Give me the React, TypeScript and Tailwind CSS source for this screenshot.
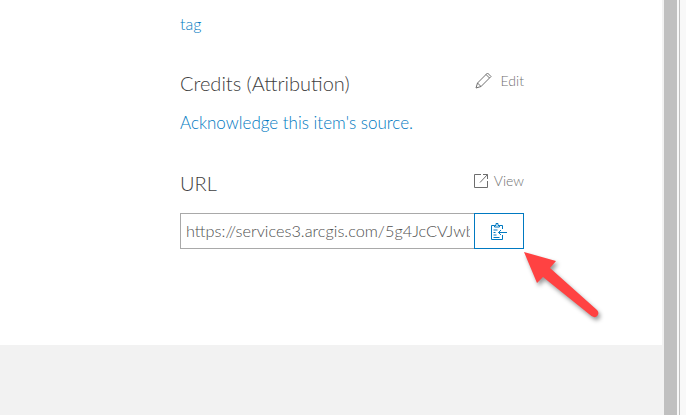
const font = "font-['Lato','Open_Sans',sans-serif]";

function Pencil() {
  return (
    <svg width="17" height="17" viewBox="0 0 17 17" fill="none" stroke="#6e6e6e" strokeWidth="1">
      <path d="M1 16l1.500-5L12.500 1l3.500 3.500-10 10z" />
      <path d="M2.500 11L6 14.500M11 2.500L14.500 6" />
    </svg>
  );
}

function Launch() {
  return (
    <svg width="16" height="16" viewBox="0 0 16 16" fill="none" stroke="#6e6e6e" strokeWidth="1">
      <path d="M8 1.500H1.500v13h13V8" />
      <path d="M7 9.500L14.500 1.500M10 1.500h4.500V6" />
    </svg>
  );
}

function ClipboardIcon() {
  return (
    <svg width="16" height="17" viewBox="0 0 16 17" fill="none" stroke="#0079c1" strokeWidth="1">
      <path d="M3.500 2.500H.5v14h11v-4.500M11.500 6V2.500H8.500" />
      <path d="M3.500 4V2.500h1.500V.5h2v2h1.500V4z" />
      <path d="M2.500 7h4M2.500 9.500h2M2.500 12h3M2.500 14.500h6" />
      <path d="M16 9.500H7.500M10 7L7.500 9.500 10 12" />
    </svg>
  );
}

function Arrow() {
  return (
    <svg
      className="absolute left-[520px] top-[248px] drop-shadow-[2px_3px_2px_rgba(0,0,0,0.4)]"
      width="90"
      height="85"
      viewBox="0 0 90 85"
    >
      <path
        d="M4 4l32 9-6 7 47 42q2.500 2.500.5 5.500t-6 .5L23 29l-6 6z"
        fill="#ff4242"
      />
    </svg>
  );
}

export default function App() {
  return (
    <div className={`relative flex h-[415px] w-[686px] overflow-hidden bg-[#f8f8f8] ${font}`}>
      <div className="flex w-[664px] flex-col bg-[#f2f2f2]">
        <main className="h-[345px] w-[662px] bg-white pl-[180px]">
          <div className="flex w-[344px] flex-col">
            <a className="mt-[14px] text-[16px] font-light leading-[20px] text-[#0079c1]">tag</a>

            <div className="mt-[36px] flex items-start justify-between">
              <h2 className="text-[20px] font-light leading-[26px] text-[#404040]">Credits (Attribution)</h2>
              <div className="mt-[2px] flex items-center gap-[9px] text-[14px] font-light leading-[17px] text-[#707070]">
                <Pencil />
                Edit
              </div>
            </div>

            <a className="mt-[16px] text-[17px] font-light leading-[22px] text-[#0079c1]">Acknowledge this item's source.</a>

            <div className="mt-[36px] flex items-start justify-between">
              <h2 className="text-[20px] font-light leading-[26px] text-[#404040]">URL</h2>
              <div className="mt-[2px] flex items-center gap-[5px] text-[14px] font-light leading-[17px] text-[#707070]">
                <Launch />
                View
              </div>
            </div>

            <div className="mt-[17px] flex h-[36px]">
              <div className="min-w-0 flex-1 border border-r-0 border-[#a9a9a9] pl-[5px] pr-[4px]">
                <div className="overflow-hidden whitespace-nowrap text-[16.3px] font-light leading-[34px] text-[#505050]">
                  https://services3.arcgis.com/5g4JcCVJwb
                </div>
              </div>
              <button className="flex w-[50px] items-center justify-center border border-[#0079c1] bg-white">
                <ClipboardIcon />
              </button>
            </div>
          </div>
        </main>
      </div>
      <div className="w-[13px] bg-[#c0c0c0]" />
      <div className="w-[2px] bg-[#f8f8f8]" />
      <div className="w-[1px] bg-[#c0c0c0]" />
      <Arrow />
    </div>
  );
}
